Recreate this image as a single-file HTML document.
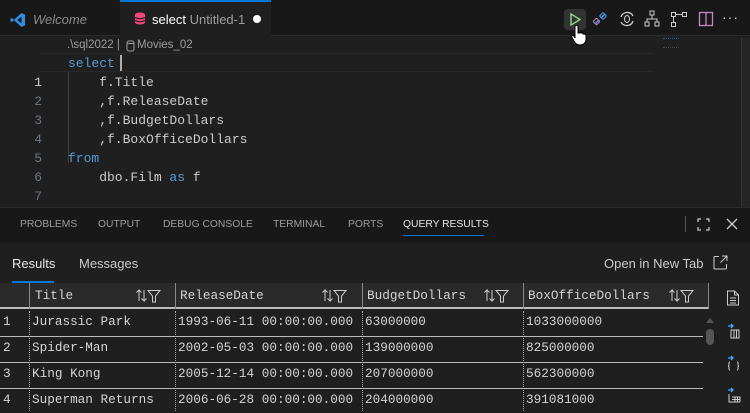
<!DOCTYPE html>
<html><head><meta charset="utf-8"><style>
*{margin:0;padding:0;box-sizing:border-box}
body{width:750px;height:411px;background:#1f1f1f;font-family:"Liberation Sans",sans-serif;color:#ccc;position:relative;overflow:hidden}
.a{position:absolute;white-space:pre}
.mono{font-family:"Liberation Mono",monospace;font-size:12.7px}
.code{font-family:"Liberation Mono",monospace;font-size:13px;color:#ccc}
.ln{color:#6e7681;font-family:"Liberation Mono",monospace;font-size:13px;width:42px;text-align:right}
.kw{color:#569cd6}
.pt{font-size:10.3px;color:#9d9d9d;top:219px}
.cell{color:#d4d4d4}
.vline{position:absolute;border-left:1px dotted #aaa;width:0}
</style></head><body>
<div class="a" style="left:0;top:0;width:750px;height:36px;background:#181818;border-bottom:1px solid #2b2b2b"></div>
<div class="a" style="left:120px;top:0;width:151px;height:37px;background:#1f1f1f;border-top:2px solid #0078d4"></div>
<svg class="a" style="left:10px;top:12px" width="16" height="16" viewBox="0 0 16 16"><path d="M11.5 1 L15 2.7 V13.3 L11.5 15 L4 8.2 L1.6 10 L0.5 9.4 V6.6 L1.6 6 L4 7.8 Z M11.5 4.8 L7.2 8 L11.5 11.2 Z" fill="#2f8fe0"/></svg>
<div class="a" style="left:33px;top:12px;font-size:13px;font-style:italic;color:#8b8b8b">Welcome</div>
<svg class="a" style="left:134px;top:12px" width="12" height="13" viewBox="0 0 12 13"><ellipse cx="6" cy="2.5" rx="5" ry="2" fill="#f1467a"/><rect x="1" y="2.5" width="10" height="8" fill="#f1467a"/><ellipse cx="6" cy="10.5" rx="5" ry="2" fill="#f1467a"/><path d="M1 5.5 Q6 8 11 5.5 M1 8.5 Q6 11 11 8.5" stroke="#1f1f1f" fill="none"/></svg>
<div class="a" style="left:152px;top:12px;font-size:13px;color:#fff">select <span style="color:#9d9d9d">Untitled-1</span></div>
<div class="a" style="left:253px;top:15px;width:8px;height:8px;border-radius:50%;background:#fff"></div>
<div class="a" style="left:564px;top:9px;width:22px;height:21px;background:#333;border-radius:4px"></div>
<svg class="a" style="left:569px;top:13px" width="12" height="13"><path d="M2 1 L11 6.5 L2 12 Z" fill="none" stroke="#89d185" stroke-width="1.5"/></svg>
<svg class="a" style="left:570px;top:24px" width="18" height="22"><path d="M5 2 Q6.5 0.5 8 2 V9 H10 Q12 8 13 10 H14 Q16 10 16 12 V16 Q15 21 10 21 Q6 21 4 17 L1.5 12.5 Q2 11 4 12 L5 14 Z" fill="#fff" stroke="#000" stroke-width="1"/></svg>
<svg class="a" style="left:592px;top:11px" width="16" height="16"><path d="M3 13 L7 9 M9 7 L13 3" stroke="#4da3ff" stroke-width="1.5"/><rect x="2" y="8" width="5" height="5" rx="1" transform="rotate(-45 4.5 10.5)" fill="none" stroke="#c586c0"/><rect x="8.5" y="2.5" width="5" height="5" rx="1" transform="rotate(-45 11 5)" fill="none" stroke="#4da3ff"/></svg>
<svg class="a" style="left:618px;top:10px" width="18" height="18"><path d="M3 7 A6.5 6.5 0 0 1 15 6 M15 11 A6.5 6.5 0 0 1 3 12" stroke="#ccc" fill="none" stroke-width="1.3"/><ellipse cx="9" cy="9" rx="2.5" ry="3.5" fill="none" stroke="#ccc"/></svg>
<svg class="a" style="left:644px;top:10px" width="16" height="18"><rect x="6" y="1" width="4" height="4" fill="none" stroke="#ccc"/><rect x="1" y="12" width="4" height="4" fill="none" stroke="#ccc"/><rect x="11" y="12" width="4" height="4" fill="none" stroke="#ccc"/><path d="M8 5 V9 M3 12 V9 H13 V12" stroke="#ccc" fill="none"/></svg>
<svg class="a" style="left:670px;top:10px" width="18" height="18"><rect x="1.5" y="2.5" width="4" height="4" fill="none" stroke="#ccc"/><rect x="12.5" y="2.5" width="4" height="4" fill="none" stroke="#ccc"/><rect x="1.5" y="12.5" width="4" height="4" fill="none" stroke="#ccc"/><path d="M6 4.5 H12 M3.5 7 V12" stroke="#ccc"/></svg>
<svg class="a" style="left:698px;top:11px" width="16" height="16"><rect x="1.5" y="1.5" width="13" height="13" fill="none" stroke="#c586c0" stroke-width="1.3"/><path d="M8 1 V15" stroke="#c586c0" stroke-width="1.3"/></svg>
<div class="a" style="left:722px;top:9px;font-size:14px;color:#ccc;letter-spacing:1px">···</div>
<div class="a" style="left:67px;top:39px;font-size:11.5px;color:#9d9d9d">.\sql2022 |</div>
<svg class="a" style="left:126px;top:40px" width="9" height="12"><rect x="1" y="1" width="7" height="10" rx="2" fill="none" stroke="#9d9d9d"/><path d="M1 3.5 H8" stroke="#9d9d9d"/></svg>
<div class="a" style="left:137px;top:39px;font-size:11.5px;color:#9d9d9d">Movies_02</div>
<div class="a" style="left:40px;top:53px;width:614px;height:19px;border-top:1px solid #282828;border-bottom:1px solid #282828"></div>
<div class="a" style="left:120px;top:55px;width:2px;height:16px;background:#aeafad"></div>
<div class="a" style="left:68px;top:72px;width:1px;height:91px;background:#404040"></div>
<div class="a" style="left:0;top:54px;line-height:19px">
<div class="ln" style="color:#ccc">1</div><div class="ln">2</div><div class="ln">3</div><div class="ln">4</div><div class="ln">5</div><div class="ln">6</div><div class="ln">7</div></div>
<div class="a code" style="left:68px;top:54px;line-height:19px"><span class="kw">select</span>
    f.Title
    ,f.ReleaseDate
    ,f.BudgetDollars
    ,f.BoxOfficeDollars
<span class="kw">from</span>
    dbo.Film <span class="kw">as</span> f</div>
<div class="a" style="left:663px;top:38px;width:16px;height:10px;opacity:.4;border-top:1px dotted #4da3ff;border-bottom:1px dotted #888"></div>
<div class="a" style="left:741px;top:38px;width:9px;height:170px;background:#252525;border-left:1px solid #333"></div>
<div class="a" style="left:0;top:207px;width:750px;height:1px;background:#2b2b2b"></div>
<div class="a" style="left:0;top:208px;width:750px;height:34px;background:#181818"></div>
<div class="a pt" style="left:20px">PROBLEMS</div>
<div class="a pt" style="left:98px">OUTPUT</div>
<div class="a pt" style="left:163px">DEBUG CONSOLE</div>
<div class="a pt" style="left:273px">TERMINAL</div>
<div class="a pt" style="left:348px">PORTS</div>
<div class="a pt" style="left:403px;color:#e7e7e7">QUERY RESULTS</div>
<div class="a" style="left:403px;top:235px;width:81px;height:1px;background:#0078d4"></div>
<div class="a" style="left:685px;top:216px;width:1px;height:16px;background:#555"></div>
<svg class="a" style="left:697px;top:218px" width="13" height="13"><path d="M1 4 V1 H4 M9 1 H12 V4 M12 9 V12 H9 M4 12 H1 V9" stroke="#ccc" fill="none" stroke-width="1.2"/></svg>
<svg class="a" style="left:726px;top:218px" width="12" height="12"><path d="M1 1 L11 11 M11 1 L1 11" stroke="#ccc" stroke-width="1.3"/></svg>
<div class="a" style="left:12px;top:256px;font-size:13px;color:#e7e7e7">Results</div>
<div class="a" style="left:79px;top:256px;font-size:13px;color:#ccc">Messages</div>
<div class="a" style="left:12px;top:281px;width:42px;height:2px;background:#0078d4"></div>
<div class="a" style="left:604px;top:256px;font-size:13px;color:#ccc">Open in New Tab</div>
<svg class="a" style="left:713px;top:255px" width="15" height="15"><path d="M6 1.5 H2 Q1 1.5 1 2.5 V13 Q1 14 2 14 H12.5 Q13.5 14 13.5 13 V9 M9 1 H14 V6 M14 1 L7.5 7.5" stroke="#ccc" fill="none"/></svg>
<div class="a" style="left:0;top:283px;width:709px;height:26px;background:#2a2a2a;border-bottom:2px solid #bbb"></div>
<div class="a" style="left:29px;top:283px;width:1px;height:26px;background:#888"></div>
<div class="a" style="left:175px;top:283px;width:1px;height:26px;background:#888"></div>
<div class="a" style="left:362px;top:283px;width:1px;height:26px;background:#888"></div>
<div class="a" style="left:523px;top:283px;width:1px;height:26px;background:#888"></div>
<div class="a" style="left:708px;top:283px;width:1px;height:26px;background:#888"></div>
<div class="a mono cell" style="left:35px;top:288px">Title</div>
<div class="a mono cell" style="left:180px;top:288px">ReleaseDate</div>
<div class="a mono cell" style="left:367px;top:288px">BudgetDollars</div>
<div class="a mono cell" style="left:528px;top:288px">BoxOfficeDollars</div>
<svg width="0" height="0" style="position:absolute"><defs><g id="sf"><path d="M3 13 V2 L0.5 4.5 M3 2 L5.5 4.5 M8 2 V13 L5.5 10.5 M8 13 L10.5 10.5" stroke="#ccc" fill="none"/><path d="M12 2.5 H24 L19.5 8 V14 H16.5 V8 Z" stroke="#ccc" fill="none"/></g></defs></svg>
<svg class="a" style="left:136px;top:288px" width="26" height="16"><use href="#sf"/></svg>
<svg class="a" style="left:322px;top:288px" width="26" height="16"><use href="#sf"/></svg>
<svg class="a" style="left:484px;top:288px" width="26" height="16"><use href="#sf"/></svg>
<svg class="a" style="left:669px;top:288px" width="26" height="16"><use href="#sf"/></svg>
<div class="a" style="left:0;top:336px;width:703px;height:1px;background:#bbb"></div>
<div class="a" style="left:0;top:362px;width:703px;height:1px;background:#bbb"></div>
<div class="a" style="left:0;top:388px;width:703px;height:1px;background:#bbb"></div>
<div class="vline" style="left:29px;top:311px;height:100px"></div>
<div class="vline" style="left:175px;top:311px;height:100px"></div>
<div class="vline" style="left:362px;top:311px;height:100px"></div>
<div class="vline" style="left:523px;top:311px;height:100px"></div>
<div class="a mono cell" style="left:3px;top:309px;line-height:26px">1
2
3
4</div>
<div class="a mono cell" style="left:32px;top:309px;line-height:26px">Jurassic Park
Spider-Man
King Kong
Superman Returns</div>
<div class="a mono cell" style="left:178px;top:309px;line-height:26px">1993-06-11 00:00:00.000
2002-05-03 00:00:00.000
2005-12-14 00:00:00.000
2006-06-28 00:00:00.000</div>
<div class="a mono cell" style="left:365px;top:309px;line-height:26px">63000000
139000000
207000000
204000000</div>
<div class="a mono cell" style="left:526px;top:309px;line-height:26px">1033000000
825000000
562300000
391081000</div>
<svg class="a" style="left:705px;top:316px" width="10" height="8"><path d="M1 7 L5 2 L9 7 Z" fill="#555"/></svg>
<div class="a" style="left:706px;top:329px;width:8px;height:16px;background:#555;border-radius:4px"></div>
<svg class="a" style="left:726px;top:290px" width="14" height="16"><path d="M1.5 1 H8.5 L12.5 5 V15 H1.5 Z M8.5 1 V5 H12.5 M4 8 H10 M4 10.5 H10 M4 13 H10" stroke="#ccc" fill="none"/></svg>
<svg class="a" style="left:727px;top:323px" width="14" height="16"><path d="M1 3 H6 M4 1 L6 3 L4 5" stroke="#4da3ff" fill="none" stroke-width="1.3"/><path d="M4 7 H12 V15 H4 Z M7 7 V15 M9.5 7 V15" stroke="#ccc" fill="none"/></svg>
<svg class="a" style="left:727px;top:355px" width="14" height="16"><path d="M1 3 H6 M4 1 L6 3 L4 5" stroke="#4da3ff" fill="none" stroke-width="1.3"/><path d="M3 7 Q1.5 7 2 10 Q1 11 2 12 Q1.5 15 3 15 M10 7 Q11.5 7 11 10 Q12 11 11 12 Q11.5 15 10 15" stroke="#ccc" fill="none"/></svg>
<svg class="a" style="left:727px;top:387px" width="14" height="16"><path d="M1 3 H6 M4 1 L6 3 L4 5" stroke="#4da3ff" fill="none" stroke-width="1.3"/><path d="M2 7 V15 H13 M5 10 H13 V15 M5 12.5 H13 M8 10 V15 M10.5 10 V15" stroke="#ccc" fill="none"/></svg>
</body></html>
